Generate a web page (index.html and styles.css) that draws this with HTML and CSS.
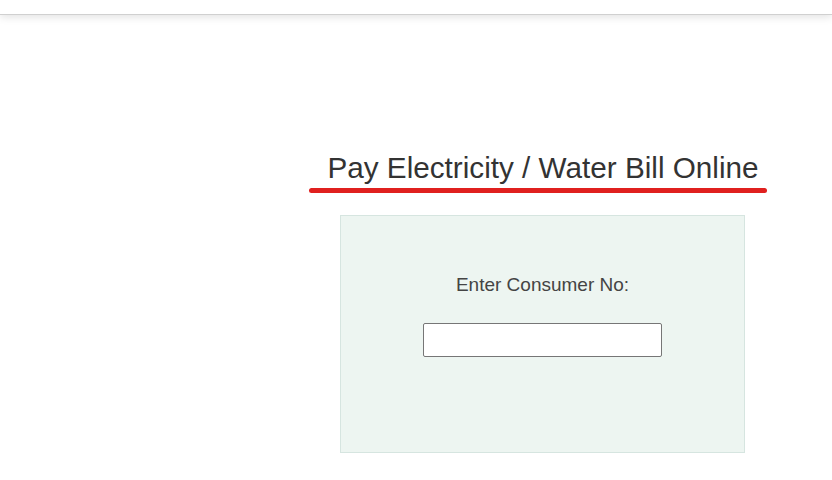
FILE: index.html
```html
<!DOCTYPE html>
<html lang="en">

<head>
    <meta charset="UTF-8">
    <meta name="viewport" content="width=device-width, initial-scale=1.0">
    <title>Pay Bill Online</title>

    <link rel="stylesheet" href="styles.css">
</head>

<body>
    <header class="topbar"></header>
    <div class="main">
        <div class="content">
            <h2 class="title">Pay Electricity / Water Bill Online</h2>
            <div class="underline"></div>
            <div class="panel">
                <label for="consumer" class="label">Enter Consumer No:</label>
                <input type="text" id="consumer" class="field">
            </div>
        </div>
    </div>
</body>

</html>
```

FILE: styles.css
```css
body {
    margin: 0;
    font-family: "Liberation Sans", Arial, sans-serif;
    color: #333;
    background-color: #fff;
}

.topbar {
    height: 14px;
    background-color: #fff;
    border-bottom: 1px solid #d0d0d0;
    box-shadow: 0 2px 8px rgba(0, 0, 0, .12);
}

.main {
    padding-top: 136px;
    padding-left: 309px;
}

.content {
    width: 458px;
}

.title {
    margin: 0;
    padding-left: 10px;
    font-size: 29.7px;
    font-weight: normal;
    line-height: 34px;
    text-align: center;
    color: #333;
}

.underline {
    height: 5px;
    margin-top: 3px;
    border-radius: 3px;
    background-color: #e0201f;
}

.panel {
    display: flex;
    flex-direction: column;
    align-items: center;
    width: 403px;
    height: 236px;
    margin: 22px 0 0 31px;
    background-color: #edf5f1;
    border: 1px solid #d6e5e0;
}

.label {
    margin-top: 58px;
    font-size: 19px;
    color: #444;
}

.field {
    width: 233px;
    height: 30px;
    margin-top: 27px;
    padding: 1px 2px;
    border: 1px solid #767676;
    border-radius: 2px;
    outline: none;
}
```
